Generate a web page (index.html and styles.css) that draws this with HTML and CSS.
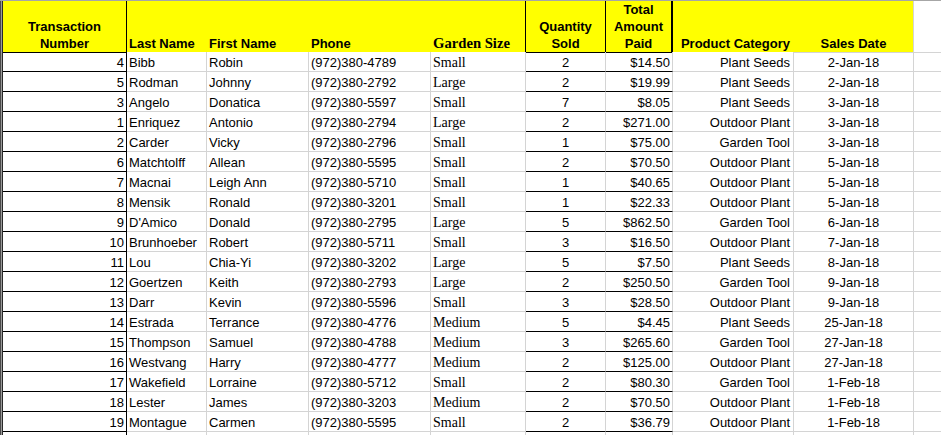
FILE: index.html
```html
<!DOCTYPE html>
<html>
<head>
<meta charset="utf-8">
<link rel="stylesheet" href="styles.css">
</head>
<body>
<div class="sheet">
  <div class="edge"></div>
  <div class="grid">
    <div class="row head">
      <div class="c a h">Transaction<br>Number</div>
      <div class="c b h">Last Name</div>
      <div class="c cc h">First Name</div>
      <div class="c d h">Phone</div>
      <div class="c e h serif">Garden Size</div>
      <div class="c f h">Quantity<br>Sold</div>
      <div class="c g h">Total<br>Amount<br>Paid</div>
      <div class="c hh h">Product Category</div>
      <div class="c i h">Sales Date</div>
      <div class="c j h"></div>
    </div>
    <div class="row"><div class="c a">4</div><div class="c b">Bibb</div><div class="c cc">Robin</div><div class="c d">(972)380-4789</div><div class="c e serif">Small</div><div class="c f">2</div><div class="c g">$14.50</div><div class="c hh">Plant Seeds</div><div class="c i">2-Jan-18</div><div class="c j"></div></div>
    <div class="row"><div class="c a">5</div><div class="c b">Rodman</div><div class="c cc">Johnny</div><div class="c d">(972)380-2792</div><div class="c e serif">Large</div><div class="c f">2</div><div class="c g">$19.99</div><div class="c hh">Plant Seeds</div><div class="c i">2-Jan-18</div><div class="c j"></div></div>
    <div class="row"><div class="c a">3</div><div class="c b">Angelo</div><div class="c cc">Donatica</div><div class="c d">(972)380-5597</div><div class="c e serif">Small</div><div class="c f">7</div><div class="c g">$8.05</div><div class="c hh">Plant Seeds</div><div class="c i">3-Jan-18</div><div class="c j"></div></div>
    <div class="row"><div class="c a">1</div><div class="c b">Enriquez</div><div class="c cc">Antonio</div><div class="c d">(972)380-2794</div><div class="c e serif">Large</div><div class="c f">2</div><div class="c g">$271.00</div><div class="c hh">Outdoor Plant</div><div class="c i">3-Jan-18</div><div class="c j"></div></div>
    <div class="row"><div class="c a">2</div><div class="c b">Carder</div><div class="c cc">Vicky</div><div class="c d">(972)380-2796</div><div class="c e serif">Small</div><div class="c f">1</div><div class="c g">$75.00</div><div class="c hh">Garden Tool</div><div class="c i">3-Jan-18</div><div class="c j"></div></div>
    <div class="row"><div class="c a">6</div><div class="c b">Matchtolff</div><div class="c cc">Allean</div><div class="c d">(972)380-5595</div><div class="c e serif">Small</div><div class="c f">2</div><div class="c g">$70.50</div><div class="c hh">Outdoor Plant</div><div class="c i">5-Jan-18</div><div class="c j"></div></div>
    <div class="row"><div class="c a">7</div><div class="c b">Macnai</div><div class="c cc">Leigh Ann</div><div class="c d">(972)380-5710</div><div class="c e serif">Small</div><div class="c f">1</div><div class="c g">$40.65</div><div class="c hh">Outdoor Plant</div><div class="c i">5-Jan-18</div><div class="c j"></div></div>
    <div class="row"><div class="c a">8</div><div class="c b">Mensik</div><div class="c cc">Ronald</div><div class="c d">(972)380-3201</div><div class="c e serif">Small</div><div class="c f">1</div><div class="c g">$22.33</div><div class="c hh">Outdoor Plant</div><div class="c i">5-Jan-18</div><div class="c j"></div></div>
    <div class="row"><div class="c a">9</div><div class="c b">D'Amico</div><div class="c cc">Donald</div><div class="c d">(972)380-2795</div><div class="c e serif">Large</div><div class="c f">5</div><div class="c g">$862.50</div><div class="c hh">Garden Tool</div><div class="c i">6-Jan-18</div><div class="c j"></div></div>
    <div class="row"><div class="c a">10</div><div class="c b">Brunhoeber</div><div class="c cc">Robert</div><div class="c d">(972)380-5711</div><div class="c e serif">Small</div><div class="c f">3</div><div class="c g">$16.50</div><div class="c hh">Outdoor Plant</div><div class="c i">7-Jan-18</div><div class="c j"></div></div>
    <div class="row"><div class="c a">11</div><div class="c b">Lou</div><div class="c cc">Chia-Yi</div><div class="c d">(972)380-3202</div><div class="c e serif">Large</div><div class="c f">5</div><div class="c g">$7.50</div><div class="c hh">Plant Seeds</div><div class="c i">8-Jan-18</div><div class="c j"></div></div>
    <div class="row"><div class="c a">12</div><div class="c b">Goertzen</div><div class="c cc">Keith</div><div class="c d">(972)380-2793</div><div class="c e serif">Large</div><div class="c f">2</div><div class="c g">$250.50</div><div class="c hh">Garden Tool</div><div class="c i">9-Jan-18</div><div class="c j"></div></div>
    <div class="row"><div class="c a">13</div><div class="c b">Darr</div><div class="c cc">Kevin</div><div class="c d">(972)380-5596</div><div class="c e serif">Small</div><div class="c f">3</div><div class="c g">$28.50</div><div class="c hh">Outdoor Plant</div><div class="c i">9-Jan-18</div><div class="c j"></div></div>
    <div class="row"><div class="c a">14</div><div class="c b">Estrada</div><div class="c cc">Terrance</div><div class="c d">(972)380-4776</div><div class="c e serif">Medium</div><div class="c f">5</div><div class="c g">$4.45</div><div class="c hh">Plant Seeds</div><div class="c i">25-Jan-18</div><div class="c j"></div></div>
    <div class="row"><div class="c a">15</div><div class="c b">Thompson</div><div class="c cc">Samuel</div><div class="c d">(972)380-4788</div><div class="c e serif">Medium</div><div class="c f">3</div><div class="c g">$265.60</div><div class="c hh">Garden Tool</div><div class="c i">27-Jan-18</div><div class="c j"></div></div>
    <div class="row"><div class="c a">16</div><div class="c b">Westvang</div><div class="c cc">Harry</div><div class="c d">(972)380-4777</div><div class="c e serif">Medium</div><div class="c f">2</div><div class="c g">$125.00</div><div class="c hh">Outdoor Plant</div><div class="c i">27-Jan-18</div><div class="c j"></div></div>
    <div class="row"><div class="c a">17</div><div class="c b">Wakefield</div><div class="c cc">Lorraine</div><div class="c d">(972)380-5712</div><div class="c e serif">Small</div><div class="c f">2</div><div class="c g">$80.30</div><div class="c hh">Garden Tool</div><div class="c i">1-Feb-18</div><div class="c j"></div></div>
    <div class="row"><div class="c a">18</div><div class="c b">Lester</div><div class="c cc">James</div><div class="c d">(972)380-3203</div><div class="c e serif">Medium</div><div class="c f">2</div><div class="c g">$70.50</div><div class="c hh">Outdoor Plant</div><div class="c i">1-Feb-18</div><div class="c j"></div></div>
    <div class="row"><div class="c a">19</div><div class="c b">Montague</div><div class="c cc">Carmen</div><div class="c d">(972)380-5595</div><div class="c e serif">Small</div><div class="c f">2</div><div class="c g">$36.79</div><div class="c hh">Outdoor Plant</div><div class="c i">1-Feb-18</div><div class="c j"></div></div>
    <div class="row"><div class="c a"></div><div class="c b"></div><div class="c cc"></div><div class="c d"></div><div class="c e"></div><div class="c f"></div><div class="c g"></div><div class="c hh"></div><div class="c i"></div><div class="c j"></div></div>
  </div>
</div>
</body>
</html>
```

FILE: styles.css
```css
html, body {
  margin: 0;
  padding: 0;
  background: #ffffff;
  overflow: hidden;
}

.sheet {
  display: flex;
  width: 941px;
  height: 435px;
  border-top: 1px solid #a6a6a6;
  box-sizing: border-box;
  overflow: hidden;
  font-family: "Liberation Sans", Arial, sans-serif;
  font-size: 13px;
  color: #000;
}

.edge {
  flex: 0 0 3px;
  background: linear-gradient(to right, #4a4a4a 0 1px, #9a9a9a 1px 2px, #2a2a2a 2px 3px);
}

.grid {
  display: flex;
  flex-direction: column;
}

.row {
  display: grid;
  grid-template-columns: 124px 80px 102px 122px 95px 80px 67px 121px 120px 60px;
  height: 20px;
  flex: 0 0 auto;
}

.c {
  box-sizing: border-box;
  display: flex;
  flex-direction: column;
  justify-content: flex-end;
  border-right: 1px solid #d4d4d4;
  border-bottom: 1px solid #d4d4d4;
  padding: 0 2px 1px 2px;
  line-height: 15px;
  white-space: nowrap;
}

.serif {
  font-family: "Liberation Serif", "Times New Roman", serif;
  font-size: 14px;
}

.a { text-align: right; border-right-color: #000; border-bottom-color: #000; }
.b, .cc, .d, .e { text-align: left; }
.f { text-align: center; border-bottom-color: #000; }
.g { text-align: right; border-bottom-color: #000; }
.hh { text-align: right; padding-right: 3px; }
.i { text-align: center; }

/* header row */
.head {
  height: 51px;
}

.h {
  background: #ffff00;
  font-weight: bold;
  line-height: 17px;
  padding-bottom: 0;
  border-bottom-color: #ffffff;
  border-right-color: #ffff00;
}

.h.serif {
  font-size: 14.67px;
}

.h.a { border-right-color: #000; border-bottom-color: #000; text-align: center; }
.h.e { border-right-color: #000; }
.h.f { border-right-color: #000; border-bottom-color: #000; }
.h.g { border-right: 2px solid #000; border-bottom-color: #000; text-align: center; }
.h.i { border-right-color: #d4d4d4; border-bottom-color: #d4d4d4; }
.h.j { background: #ffffff; border-right-color: #d4d4d4; border-bottom-color: #d4d4d4; }
```
